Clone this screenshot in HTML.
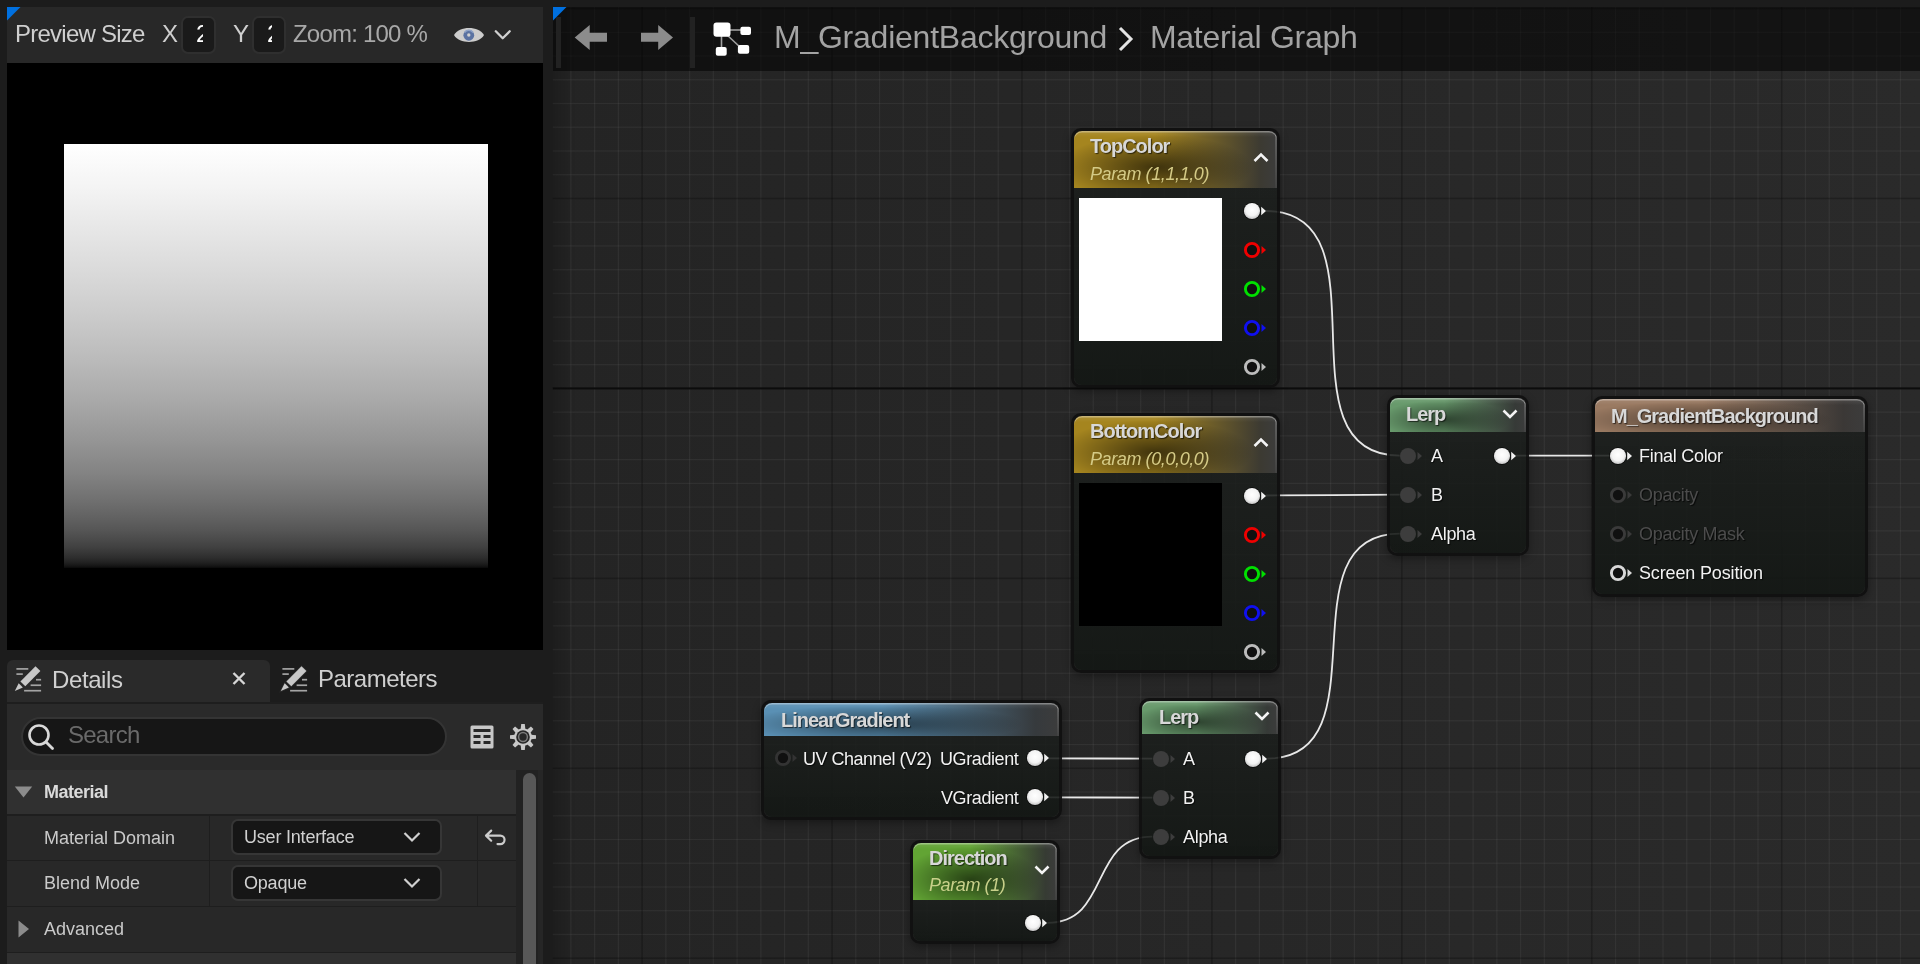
<!DOCTYPE html><html><head><meta charset="utf-8"><style>
html,body{margin:0;padding:0;width:1920px;height:964px;overflow:hidden;background:#1c1c1c;font-family:"Liberation Sans",sans-serif;}
.a{position:absolute;}
.t{position:absolute;white-space:pre;line-height:1;will-change:transform;}
</style></head><body>
<div class="a" style="left:7.00px;top:7.00px;width:536.00px;height:56.00px;background:#282828"></div>
<svg class="a" style="left:7px;top:7px" width="14" height="14"><polygon points="0,0 13.5,0 0,13.5" fill="#0070e0"/></svg>
<div class="t" style="left:15.00px;top:22.18px;font-size:24px;color:#cfcfcf;font-weight:400;font-style:normal;letter-spacing:-0.75px;">Preview Size</div>
<div class="t" style="left:162.00px;top:22.18px;font-size:24px;color:#cfcfcf;font-weight:400;font-style:normal;letter-spacing:0px;">X</div>
<div class="a" style="left:181.30px;top:16.00px;width:34.70px;height:37.60px;background:#1a1a1a;border:2px solid #2f2f2f;box-sizing:border-box;border-radius:7px"></div>
<div class="t" style="left:233.00px;top:22.18px;font-size:24px;color:#cfcfcf;font-weight:400;font-style:normal;letter-spacing:0px;">Y</div>
<div class="a" style="left:252.30px;top:16.00px;width:33.90px;height:37.60px;background:#1a1a1a;border:2px solid #2f2f2f;box-sizing:border-box;border-radius:7px"></div>
<div class="a" style="left:197px;top:16px;width:5.6px;height:36px;overflow:hidden"><div class="t" style="left:-1.4px;top:6.3px;font-size:24px;color:#fff">2</div></div>
<div class="a" style="left:267.9px;top:16px;width:4.5px;height:36px;overflow:hidden"><div class="t" style="left:-1.4px;top:6.3px;font-size:24px;color:#fff">2</div></div>
<div class="t" style="left:293.00px;top:22.18px;font-size:24px;color:#a8a8a8;font-weight:400;font-style:normal;letter-spacing:-0.8px;">Zoom: 100 %</div>
<svg class="a" style="left:440px;top:15px" width="85" height="40" viewBox="440 15 85 40"><path d="M454,35 C459,25.5 479,25.5 484,35 C479,44.3 459,44.3 454,35 Z" fill="#cdcdcd"/><circle cx="468.8" cy="35.3" r="5.4" fill="#5a72a2"/><path d="M464.5,32.5 A5.4,5.4 0 0 1 473.1,32.5" stroke="#8ea2c6" stroke-width="1.5" fill="none"/><circle cx="468.8" cy="35" r="1.7" fill="#d0d0d0"/><polyline points="495.8,31.3 502.7,38.3 509.7,31.3" fill="none" stroke="#d0d0d0" stroke-width="2.3" stroke-linecap="round" stroke-linejoin="round"/></svg>
<div class="a" style="left:7.00px;top:63.00px;width:536.00px;height:587.00px;background:#000"></div>
<div class="a" style="left:63.50px;top:144.00px;width:424.00px;height:424.00px;background:linear-gradient(to bottom,rgb(255,255,255) 0.00%,rgb(244,244,244) 10.00%,rgb(231,231,231) 20.00%,rgb(218,218,218) 30.00%,rgb(204,204,204) 40.00%,rgb(188,188,188) 50.00%,rgb(170,170,170) 60.00%,rgb(149,149,149) 70.00%,rgb(130,130,130) 78.00%,rgb(112,112,112) 84.00%,rgb(98,98,98) 88.00%,rgb(86,86,86) 91.00%,rgb(76,76,76) 93.00%,rgb(65,65,65) 95.00%,rgb(54,54,54) 96.50%,rgb(46,46,46) 97.50%,rgb(39,39,39) 98.20%,rgb(32,32,32) 98.80%,rgb(26,26,26) 99.20%,rgb(21,21,21) 99.50%,rgb(17,17,17) 99.70%,rgb(13,13,13) 99.85%,rgb(8,8,8) 100.00%)"></div>
<div class="a" style="left:7.00px;top:659.50px;width:262.50px;height:42.50px;background:#2a2a2a;border-radius:6px 6px 0 0"></div>
<svg class="a" style="left:0px;top:0px" width="50" height="964" viewBox="0 0 50 964"><g stroke="#a4a4a4" stroke-width="1.7"><path d="M16.4,668.9 H28.3"/><path d="M16.4,674.1 H22.8"/><path d="M36,679.7 H41.1"/><path d="M30.6,685.25 H41.1"/><path d="M24.1,690.7 H41.1"/></g><g fill="#c8c8c8" stroke="#2a2a2a" stroke-width="1.6" paint-order="stroke"><path d="M35.5,666.3 L40.4,671.1 L25.3,686.2 L20.4,681.4 Z"/><path d="M18.7,683.2 L22.9,687.6 L14.8,691.1 Z"/></g></svg>
<div class="t" style="left:52.40px;top:667.68px;font-size:24px;color:#d0d0d0;font-weight:400;font-style:normal;letter-spacing:-0.4px;">Details</div>
<svg class="a" style="left:231px;top:670px" width="16" height="17" viewBox="0 0 16 17"><path d="M2.5,3 L13.5,14 M13.5,3 L2.5,14" stroke="#d6d6d6" stroke-width="2.4"/></svg>
<svg class="a" style="left:266.4px;top:0px" width="50" height="964" viewBox="0 0 50 964"><g stroke="#a4a4a4" stroke-width="1.7"><path d="M16.4,668.9 H28.3"/><path d="M16.4,674.1 H22.8"/><path d="M36,679.7 H41.1"/><path d="M30.6,685.25 H41.1"/><path d="M24.1,690.7 H41.1"/></g><g fill="#c8c8c8" stroke="#2a2a2a" stroke-width="1.6" paint-order="stroke"><path d="M35.5,666.3 L40.4,671.1 L25.3,686.2 L20.4,681.4 Z"/><path d="M18.7,683.2 L22.9,687.6 L14.8,691.1 Z"/></g></svg>
<div class="t" style="left:318.20px;top:667.18px;font-size:24px;color:#cfcfcf;font-weight:400;font-style:normal;letter-spacing:-0.5px;">Parameters</div>
<div class="a" style="left:7.00px;top:702.00px;width:536.00px;height:1.60px;background:#1e1e1e"></div>
<div class="a" style="left:7.00px;top:703.60px;width:536.00px;height:260.40px;background:#2a2a2a"></div>
<div class="a" style="left:21.00px;top:717.00px;width:426.00px;height:39.00px;background:#161616;border:2px solid #343434;box-sizing:border-box;border-radius:20px"></div>
<svg class="a" style="left:27px;top:723px" width="28" height="28" viewBox="0 0 28 28"><circle cx="12" cy="12" r="9.5" fill="none" stroke="#d8d8d8" stroke-width="2.6"/><path d="M19,19 L25.5,25.5" stroke="#d8d8d8" stroke-width="2.8" stroke-linecap="round"/></svg>
<div class="t" style="left:67.80px;top:722.68px;font-size:24px;color:#6a6a6a;font-weight:400;font-style:normal;letter-spacing:-0.75px;">Search</div>
<svg class="a" style="left:469px;top:724px" width="27" height="26" viewBox="0 0 27 26"><rect x="1.5" y="1.5" width="23" height="23" rx="1.5" fill="#c8c8c8"/><g fill="#282828"><rect x="4.5" y="5" width="17" height="3"/><rect x="4.5" y="11" width="7" height="3"/><rect x="14.5" y="11" width="7" height="3"/><rect x="4.5" y="17" width="7" height="3"/><rect x="14.5" y="17" width="7" height="3"/></g></svg>
<svg class="a" style="left:503px;top:716.5px" width="40" height="40" viewBox="-20 -20 40 40"><g fill="#c8c8c8"><path d="M-2.3,-8 L-1.8,-13 L1.8,-13 L2.3,-8 Z" transform="rotate(0)"/><path d="M-2.3,-8 L-1.8,-13 L1.8,-13 L2.3,-8 Z" transform="rotate(45)"/><path d="M-2.3,-8 L-1.8,-13 L1.8,-13 L2.3,-8 Z" transform="rotate(90)"/><path d="M-2.3,-8 L-1.8,-13 L1.8,-13 L2.3,-8 Z" transform="rotate(135)"/><path d="M-2.3,-8 L-1.8,-13 L1.8,-13 L2.3,-8 Z" transform="rotate(180)"/><path d="M-2.3,-8 L-1.8,-13 L1.8,-13 L2.3,-8 Z" transform="rotate(225)"/><path d="M-2.3,-8 L-1.8,-13 L1.8,-13 L2.3,-8 Z" transform="rotate(270)"/><path d="M-2.3,-8 L-1.8,-13 L1.8,-13 L2.3,-8 Z" transform="rotate(315)"/><circle cx="0" cy="0" r="8.8"/></g><circle cx="0" cy="0" r="6.8" fill="#262626"/><circle cx="0" cy="0" r="4.4" fill="none" stroke="#7a7a7a" stroke-width="1.5"/></svg>
<div class="a" style="left:7.00px;top:769.50px;width:509.00px;height:44.50px;background:#303030"></div>
<svg class="a" style="left:14px;top:786px" width="19" height="12" viewBox="0 0 19 12"><polygon points="0.8,0.5 18.2,0.5 9.5,11.5" fill="#8c8c8c"/></svg>
<div class="t" style="left:44.40px;top:782.76px;font-size:18px;color:#dadada;font-weight:700;font-style:normal;letter-spacing:-0.5px;">Material</div>
<div class="a" style="left:7.00px;top:814.00px;width:509.00px;height:2.00px;background:#1e1e1e"></div>
<div class="a" style="left:7.00px;top:816.00px;width:509.00px;height:43.50px;background:#282828"></div>
<div class="a" style="left:7.00px;top:859.50px;width:509.00px;height:1.50px;background:#1e1e1e"></div>
<div class="a" style="left:7.00px;top:861.00px;width:509.00px;height:44.50px;background:#282828"></div>
<div class="a" style="left:7.00px;top:905.50px;width:509.00px;height:1.50px;background:#1e1e1e"></div>
<div class="a" style="left:7.00px;top:907.00px;width:509.00px;height:44.50px;background:#282828"></div>
<div class="a" style="left:7.00px;top:951.50px;width:509.00px;height:1.50px;background:#1e1e1e"></div>
<div class="a" style="left:7.00px;top:953.00px;width:509.00px;height:11.00px;background:#303030"></div>
<div class="a" style="left:208.60px;top:816.00px;width:1.40px;height:89.50px;background:#1e1e1e"></div>
<div class="a" style="left:476.50px;top:816.00px;width:1.50px;height:89.50px;background:#1f1f1f"></div>
<div class="t" style="left:44.40px;top:828.76px;font-size:18px;color:#cacaca;font-weight:400;font-style:normal;letter-spacing:0px;">Material Domain</div>
<div class="t" style="left:44.40px;top:873.76px;font-size:18px;color:#cacaca;font-weight:400;font-style:normal;letter-spacing:0px;">Blend Mode</div>
<div class="t" style="left:44.40px;top:919.76px;font-size:18px;color:#cacaca;font-weight:400;font-style:normal;letter-spacing:0px;">Advanced</div>
<svg class="a" style="left:18px;top:920px" width="12" height="18" viewBox="0 0 12 18"><polygon points="0.5,0.5 11,9 0.5,17.5" fill="#8c8c8c"/></svg>
<div class="a" style="left:231.30px;top:819.40px;width:210.40px;height:36.00px;background:#161616;border:2px solid #363636;box-sizing:border-box;border-radius:7px"></div>
<div class="t" style="left:244.40px;top:828.36px;font-size:18px;color:#d0d0d0;font-weight:400;font-style:normal;letter-spacing:-0.2px;">User Interface</div>
<svg class="a" style="left:402px;top:830.4px" width="20" height="14" viewBox="0 0 20 14"><polyline points="2.5,3 10,10.5 17.5,3" fill="none" stroke="#d0d0d0" stroke-width="2.2"/></svg>
<div class="a" style="left:231.30px;top:865.00px;width:210.40px;height:36.00px;background:#161616;border:2px solid #363636;box-sizing:border-box;border-radius:7px"></div>
<div class="t" style="left:244.40px;top:873.96px;font-size:18px;color:#d0d0d0;font-weight:400;font-style:normal;letter-spacing:-0.2px;">Opaque</div>
<svg class="a" style="left:402px;top:876.0px" width="20" height="14" viewBox="0 0 20 14"><polyline points="2.5,3 10,10.5 17.5,3" fill="none" stroke="#d0d0d0" stroke-width="2.2"/></svg>
<svg class="a" style="left:475px;top:820px" width="40" height="35" viewBox="475 820 40 35"><path d="M491.2,830.6 L486,835.6 L491.2,840.7 M486.5,835.6 H500.3 A4.25,4.25 0 0 1 500.3,844.1 H497.5" fill="none" stroke="#cccccc" stroke-width="2.2" stroke-linecap="round" stroke-linejoin="round"/></svg>
<div class="a" style="left:516.00px;top:769.50px;width:27.00px;height:194.50px;background:#222222"></div>
<div class="a" style="left:537.70px;top:769.50px;width:5.30px;height:194.50px;background:#262626"></div>
<div class="a" style="left:523.30px;top:773.00px;width:13.20px;height:207.00px;background:#585858;border-radius:7px"></div>
<div class="a" style="left:552.50px;top:7.00px;width:1367.50px;height:957.00px;background:linear-gradient(to right,#242424,#2a2a2a)"></div>
<svg class="a" style="left:0;top:0" width="1920" height="964" viewBox="0 0 1920 964"><defs><clipPath id="gc"><rect x="552.5" y="7" width="1367.5" height="957"/></clipPath></defs><g clip-path="url(#gc)"><rect x="546.48" y="7" width="1.3" height="957" fill="rgba(255,255,255,0.052)"/><rect x="570.22" y="7" width="1.3" height="957" fill="rgba(255,255,255,0.052)"/><rect x="593.97" y="7" width="1.3" height="957" fill="rgba(255,255,255,0.052)"/><rect x="617.71" y="7" width="1.3" height="957" fill="rgba(255,255,255,0.052)"/><rect x="665.19" y="7" width="1.3" height="957" fill="rgba(255,255,255,0.052)"/><rect x="688.93" y="7" width="1.3" height="957" fill="rgba(255,255,255,0.052)"/><rect x="712.68" y="7" width="1.3" height="957" fill="rgba(255,255,255,0.052)"/><rect x="736.42" y="7" width="1.3" height="957" fill="rgba(255,255,255,0.052)"/><rect x="760.16" y="7" width="1.3" height="957" fill="rgba(255,255,255,0.052)"/><rect x="783.90" y="7" width="1.3" height="957" fill="rgba(255,255,255,0.052)"/><rect x="807.64" y="7" width="1.3" height="957" fill="rgba(255,255,255,0.052)"/><rect x="855.13" y="7" width="1.3" height="957" fill="rgba(255,255,255,0.052)"/><rect x="878.87" y="7" width="1.3" height="957" fill="rgba(255,255,255,0.052)"/><rect x="902.61" y="7" width="1.3" height="957" fill="rgba(255,255,255,0.052)"/><rect x="926.35" y="7" width="1.3" height="957" fill="rgba(255,255,255,0.052)"/><rect x="950.10" y="7" width="1.3" height="957" fill="rgba(255,255,255,0.052)"/><rect x="973.84" y="7" width="1.3" height="957" fill="rgba(255,255,255,0.052)"/><rect x="997.58" y="7" width="1.3" height="957" fill="rgba(255,255,255,0.052)"/><rect x="1045.06" y="7" width="1.3" height="957" fill="rgba(255,255,255,0.052)"/><rect x="1068.81" y="7" width="1.3" height="957" fill="rgba(255,255,255,0.052)"/><rect x="1092.55" y="7" width="1.3" height="957" fill="rgba(255,255,255,0.052)"/><rect x="1116.29" y="7" width="1.3" height="957" fill="rgba(255,255,255,0.052)"/><rect x="1140.03" y="7" width="1.3" height="957" fill="rgba(255,255,255,0.052)"/><rect x="1163.77" y="7" width="1.3" height="957" fill="rgba(255,255,255,0.052)"/><rect x="1187.52" y="7" width="1.3" height="957" fill="rgba(255,255,255,0.052)"/><rect x="1235.00" y="7" width="1.3" height="957" fill="rgba(255,255,255,0.052)"/><rect x="1258.74" y="7" width="1.3" height="957" fill="rgba(255,255,255,0.052)"/><rect x="1282.48" y="7" width="1.3" height="957" fill="rgba(255,255,255,0.052)"/><rect x="1306.23" y="7" width="1.3" height="957" fill="rgba(255,255,255,0.052)"/><rect x="1329.97" y="7" width="1.3" height="957" fill="rgba(255,255,255,0.052)"/><rect x="1353.71" y="7" width="1.3" height="957" fill="rgba(255,255,255,0.052)"/><rect x="1377.45" y="7" width="1.3" height="957" fill="rgba(255,255,255,0.052)"/><rect x="1424.94" y="7" width="1.3" height="957" fill="rgba(255,255,255,0.052)"/><rect x="1448.68" y="7" width="1.3" height="957" fill="rgba(255,255,255,0.052)"/><rect x="1472.42" y="7" width="1.3" height="957" fill="rgba(255,255,255,0.052)"/><rect x="1496.16" y="7" width="1.3" height="957" fill="rgba(255,255,255,0.052)"/><rect x="1519.90" y="7" width="1.3" height="957" fill="rgba(255,255,255,0.052)"/><rect x="1543.65" y="7" width="1.3" height="957" fill="rgba(255,255,255,0.052)"/><rect x="1567.39" y="7" width="1.3" height="957" fill="rgba(255,255,255,0.052)"/><rect x="1614.87" y="7" width="1.3" height="957" fill="rgba(255,255,255,0.052)"/><rect x="1638.61" y="7" width="1.3" height="957" fill="rgba(255,255,255,0.052)"/><rect x="1662.36" y="7" width="1.3" height="957" fill="rgba(255,255,255,0.052)"/><rect x="1686.10" y="7" width="1.3" height="957" fill="rgba(255,255,255,0.052)"/><rect x="1709.84" y="7" width="1.3" height="957" fill="rgba(255,255,255,0.052)"/><rect x="1733.58" y="7" width="1.3" height="957" fill="rgba(255,255,255,0.052)"/><rect x="1757.32" y="7" width="1.3" height="957" fill="rgba(255,255,255,0.052)"/><rect x="1804.81" y="7" width="1.3" height="957" fill="rgba(255,255,255,0.052)"/><rect x="1828.55" y="7" width="1.3" height="957" fill="rgba(255,255,255,0.052)"/><rect x="1852.29" y="7" width="1.3" height="957" fill="rgba(255,255,255,0.052)"/><rect x="1876.03" y="7" width="1.3" height="957" fill="rgba(255,255,255,0.052)"/><rect x="1899.78" y="7" width="1.3" height="957" fill="rgba(255,255,255,0.052)"/><rect x="1923.52" y="7" width="1.3" height="957" fill="rgba(255,255,255,0.052)"/><rect x="552.5" y="-15.86" width="1367.5" height="1.3" fill="rgba(255,255,255,0.052)"/><rect x="552.5" y="31.62" width="1367.5" height="1.3" fill="rgba(255,255,255,0.052)"/><rect x="552.5" y="55.36" width="1367.5" height="1.3" fill="rgba(255,255,255,0.052)"/><rect x="552.5" y="79.10" width="1367.5" height="1.3" fill="rgba(255,255,255,0.052)"/><rect x="552.5" y="102.85" width="1367.5" height="1.3" fill="rgba(255,255,255,0.052)"/><rect x="552.5" y="126.59" width="1367.5" height="1.3" fill="rgba(255,255,255,0.052)"/><rect x="552.5" y="150.33" width="1367.5" height="1.3" fill="rgba(255,255,255,0.052)"/><rect x="552.5" y="174.07" width="1367.5" height="1.3" fill="rgba(255,255,255,0.052)"/><rect x="552.5" y="221.56" width="1367.5" height="1.3" fill="rgba(255,255,255,0.052)"/><rect x="552.5" y="245.30" width="1367.5" height="1.3" fill="rgba(255,255,255,0.052)"/><rect x="552.5" y="269.04" width="1367.5" height="1.3" fill="rgba(255,255,255,0.052)"/><rect x="552.5" y="292.78" width="1367.5" height="1.3" fill="rgba(255,255,255,0.052)"/><rect x="552.5" y="316.52" width="1367.5" height="1.3" fill="rgba(255,255,255,0.052)"/><rect x="552.5" y="340.27" width="1367.5" height="1.3" fill="rgba(255,255,255,0.052)"/><rect x="552.5" y="364.01" width="1367.5" height="1.3" fill="rgba(255,255,255,0.052)"/><rect x="552.5" y="411.49" width="1367.5" height="1.3" fill="rgba(255,255,255,0.052)"/><rect x="552.5" y="435.23" width="1367.5" height="1.3" fill="rgba(255,255,255,0.052)"/><rect x="552.5" y="458.98" width="1367.5" height="1.3" fill="rgba(255,255,255,0.052)"/><rect x="552.5" y="482.72" width="1367.5" height="1.3" fill="rgba(255,255,255,0.052)"/><rect x="552.5" y="506.46" width="1367.5" height="1.3" fill="rgba(255,255,255,0.052)"/><rect x="552.5" y="530.20" width="1367.5" height="1.3" fill="rgba(255,255,255,0.052)"/><rect x="552.5" y="553.94" width="1367.5" height="1.3" fill="rgba(255,255,255,0.052)"/><rect x="552.5" y="601.43" width="1367.5" height="1.3" fill="rgba(255,255,255,0.052)"/><rect x="552.5" y="625.17" width="1367.5" height="1.3" fill="rgba(255,255,255,0.052)"/><rect x="552.5" y="648.91" width="1367.5" height="1.3" fill="rgba(255,255,255,0.052)"/><rect x="552.5" y="672.65" width="1367.5" height="1.3" fill="rgba(255,255,255,0.052)"/><rect x="552.5" y="696.40" width="1367.5" height="1.3" fill="rgba(255,255,255,0.052)"/><rect x="552.5" y="720.14" width="1367.5" height="1.3" fill="rgba(255,255,255,0.052)"/><rect x="552.5" y="743.88" width="1367.5" height="1.3" fill="rgba(255,255,255,0.052)"/><rect x="552.5" y="791.36" width="1367.5" height="1.3" fill="rgba(255,255,255,0.052)"/><rect x="552.5" y="815.11" width="1367.5" height="1.3" fill="rgba(255,255,255,0.052)"/><rect x="552.5" y="838.85" width="1367.5" height="1.3" fill="rgba(255,255,255,0.052)"/><rect x="552.5" y="862.59" width="1367.5" height="1.3" fill="rgba(255,255,255,0.052)"/><rect x="552.5" y="886.33" width="1367.5" height="1.3" fill="rgba(255,255,255,0.052)"/><rect x="552.5" y="910.07" width="1367.5" height="1.3" fill="rgba(255,255,255,0.052)"/><rect x="552.5" y="933.82" width="1367.5" height="1.3" fill="rgba(255,255,255,0.052)"/><rect x="552.5" y="981.30" width="1367.5" height="1.3" fill="rgba(255,255,255,0.052)"/><rect x="641.30" y="7" width="1.6" height="957" fill="rgba(0,0,0,0.24)"/><rect x="831.24" y="7" width="1.6" height="957" fill="rgba(0,0,0,0.24)"/><rect x="1021.17" y="7" width="1.6" height="957" fill="rgba(0,0,0,0.24)"/><rect x="1211.11" y="7" width="1.6" height="957" fill="rgba(0,0,0,0.24)"/><rect x="1401.04" y="7" width="1.6" height="957" fill="rgba(0,0,0,0.24)"/><rect x="1590.98" y="7" width="1.6" height="957" fill="rgba(0,0,0,0.24)"/><rect x="1780.92" y="7" width="1.6" height="957" fill="rgba(0,0,0,0.24)"/><rect x="552.5" y="7.73" width="1367.5" height="1.6" fill="rgba(0,0,0,0.24)"/><rect x="552.5" y="197.66" width="1367.5" height="1.6" fill="rgba(0,0,0,0.24)"/><rect x="552.5" y="577.54" width="1367.5" height="1.6" fill="rgba(0,0,0,0.24)"/><rect x="552.5" y="767.47" width="1367.5" height="1.6" fill="rgba(0,0,0,0.24)"/><rect x="552.5" y="957.41" width="1367.5" height="1.6" fill="rgba(0,0,0,0.24)"/><rect x="552.5" y="387.40" width="1367.5" height="2" fill="#0c0c0c"/></g></svg>
<div class="a" style="left:552.50px;top:7.00px;width:22.00px;height:957.00px;background:linear-gradient(to right,rgba(0,0,0,0.18),rgba(0,0,0,0))"></div>
<svg class="a" style="left:0;top:0" width="1920" height="964" viewBox="0 0 1920 964"><defs><radialGradient id="pw" cx="50%" cy="42%" r="58%"><stop offset="0%" stop-color="#ffffff"/><stop offset="65%" stop-color="#f3f3f3"/><stop offset="100%" stop-color="#c4c4c4"/></radialGradient></defs><g fill="none" stroke="#e8e8e8" stroke-width="1.8"><path d="M1266.00,211.00 C1392.10,211.00 1273.60,455.60 1399.70,455.60"/><path d="M1266.00,495.50 C1310.87,495.50 1354.83,494.60 1399.70,494.60"/><path d="M1515.70,455.60 C1547.10,455.60 1578.40,455.70 1609.80,455.70"/><path d="M1267.30,758.60 C1386.43,758.60 1280.57,533.60 1399.70,533.60"/><path d="M1048.50,758.40 C1083.17,758.40 1117.63,758.60 1152.30,758.60"/><path d="M1048.50,797.40 C1083.17,797.40 1117.63,797.60 1152.30,797.60"/><path d="M1047.40,922.80 C1111.10,922.80 1088.60,836.60 1152.30,836.60"/></g></svg>
<div class="a" style="left:1070.70px;top:128.10px;width:209.00px;height:260.10px;border-radius:10px;border:3px solid rgba(16,16,16,0.95);box-sizing:border-box;box-shadow:0 3px 9px rgba(0,0,0,0.35)"><div class="a" style="left:0;top:56.90px;width:100%;bottom:0;background:linear-gradient(to bottom,rgba(28,31,29,0.88),rgba(19,23,20,0.9));border-radius:0 0 7.5px 7.5px"></div><div class="a" style="left:0;top:0;width:100%;height:56.90px;border-radius:8px 8px 0 0;overflow:hidden;box-shadow:inset 0 1.6px 0 rgba(255,255,255,0.32);background:linear-gradient(to bottom,rgba(255,255,255,0.10) 0px,rgba(255,255,255,0) 6px),radial-gradient(ellipse 48% 58% at 40% 64%,rgba(0,0,0,0.62),rgba(0,0,0,0.279) 55%,rgba(0,0,0,0) 100%),linear-gradient(to right,#a5851f 0%,#a5851f 40%,#3c3a32 92%,#3c3c3c 100%)"><div class="a" style="right:0;top:0;width:2px;height:100%;background:linear-gradient(to bottom,rgba(255,255,255,0.2),rgba(255,255,255,0.03))"></div></div></div>
<div class="t" style="left:1089.60px;top:136.22px;font-size:20px;font-weight:700;color:#d8d8d8;letter-spacing:-1px;text-shadow:1px 1px 1px rgba(0,0,0,0.6)">TopColor</div>
<div class="t" style="left:1090.10px;top:164.76px;font-size:18px;font-style:italic;color:#d4ca86;letter-spacing:-0.4px">Param (1,1,1,0)</div>
<svg class="a" style="left:1252.50px;top:151.50px" width="16" height="12" viewBox="0 0 16 12"><polyline points="1.5,9 8,2.5 14.5,9" fill="none" stroke="#f4f4f4" stroke-width="2.6"/></svg>
<div class="a" style="left:1079px;top:198px;width:143px;height:143px;background:#fff"></div>
<svg class="a" style="left:1242.00px;top:201.00px" width="26" height="20" viewBox="0 0 26 20"><circle cx="10" cy="10" r="8.8" fill="rgba(0,0,0,0.7)"/><circle cx="10" cy="10" r="8.1" fill="url(#pw)"/><polygon points="19.2,5.8 24,10 19.2,14.2" fill="#f0f0f0"/></svg>
<svg class="a" style="left:1242.00px;top:239.80px" width="26" height="20" viewBox="0 0 26 20"><circle cx="10" cy="10" r="6.6" fill="#101010" stroke="#f00000" stroke-width="2.9"/><polygon points="19.5,6 24,10 19.5,14" fill="#f00000"/></svg>
<svg class="a" style="left:1242.00px;top:278.80px" width="26" height="20" viewBox="0 0 26 20"><circle cx="10" cy="10" r="6.6" fill="#101010" stroke="#00e000" stroke-width="2.9"/><polygon points="19.5,6 24,10 19.5,14" fill="#00e000"/></svg>
<svg class="a" style="left:1242.00px;top:317.80px" width="26" height="20" viewBox="0 0 26 20"><circle cx="10" cy="10" r="6.6" fill="#101010" stroke="#1010f0" stroke-width="2.9"/><polygon points="19.5,6 24,10 19.5,14" fill="#1010f0"/></svg>
<svg class="a" style="left:1242.00px;top:356.80px" width="26" height="20" viewBox="0 0 26 20"><circle cx="10" cy="10" r="6.6" fill="#101010" stroke="#bcbcbc" stroke-width="2.9"/><polygon points="19.5,6 24,10 19.5,14" fill="#bcbcbc"/></svg>
<div class="a" style="left:1070.70px;top:413.10px;width:209.00px;height:260.10px;border-radius:10px;border:3px solid rgba(16,16,16,0.95);box-sizing:border-box;box-shadow:0 3px 9px rgba(0,0,0,0.35)"><div class="a" style="left:0;top:56.90px;width:100%;bottom:0;background:linear-gradient(to bottom,rgba(28,31,29,0.88),rgba(19,23,20,0.9));border-radius:0 0 7.5px 7.5px"></div><div class="a" style="left:0;top:0;width:100%;height:56.90px;border-radius:8px 8px 0 0;overflow:hidden;box-shadow:inset 0 1.6px 0 rgba(255,255,255,0.32);background:linear-gradient(to bottom,rgba(255,255,255,0.10) 0px,rgba(255,255,255,0) 6px),radial-gradient(ellipse 48% 58% at 40% 64%,rgba(0,0,0,0.62),rgba(0,0,0,0.279) 55%,rgba(0,0,0,0) 100%),linear-gradient(to right,#a5851f 0%,#a5851f 40%,#3c3a32 92%,#3c3c3c 100%)"><div class="a" style="right:0;top:0;width:2px;height:100%;background:linear-gradient(to bottom,rgba(255,255,255,0.2),rgba(255,255,255,0.03))"></div></div></div>
<div class="t" style="left:1089.60px;top:421.07px;font-size:20px;font-weight:700;color:#d8d8d8;letter-spacing:-1px;text-shadow:1px 1px 1px rgba(0,0,0,0.6)">BottomColor</div>
<div class="t" style="left:1090.10px;top:449.76px;font-size:18px;font-style:italic;color:#d4ca86;letter-spacing:-0.4px">Param (0,0,0,0)</div>
<svg class="a" style="left:1252.50px;top:436.50px" width="16" height="12" viewBox="0 0 16 12"><polyline points="1.5,9 8,2.5 14.5,9" fill="none" stroke="#f4f4f4" stroke-width="2.6"/></svg>
<div class="a" style="left:1079px;top:483px;width:143px;height:143px;background:#000"></div>
<svg class="a" style="left:1242.00px;top:485.70px" width="26" height="20" viewBox="0 0 26 20"><circle cx="10" cy="10" r="8.8" fill="rgba(0,0,0,0.7)"/><circle cx="10" cy="10" r="8.1" fill="url(#pw)"/><polygon points="19.2,5.8 24,10 19.2,14.2" fill="#f0f0f0"/></svg>
<svg class="a" style="left:1242.00px;top:524.80px" width="26" height="20" viewBox="0 0 26 20"><circle cx="10" cy="10" r="6.6" fill="#101010" stroke="#f00000" stroke-width="2.9"/><polygon points="19.5,6 24,10 19.5,14" fill="#f00000"/></svg>
<svg class="a" style="left:1242.00px;top:563.80px" width="26" height="20" viewBox="0 0 26 20"><circle cx="10" cy="10" r="6.6" fill="#101010" stroke="#00e000" stroke-width="2.9"/><polygon points="19.5,6 24,10 19.5,14" fill="#00e000"/></svg>
<svg class="a" style="left:1242.00px;top:602.80px" width="26" height="20" viewBox="0 0 26 20"><circle cx="10" cy="10" r="6.6" fill="#101010" stroke="#1010f0" stroke-width="2.9"/><polygon points="19.5,6 24,10 19.5,14" fill="#1010f0"/></svg>
<svg class="a" style="left:1242.00px;top:641.80px" width="26" height="20" viewBox="0 0 26 20"><circle cx="10" cy="10" r="6.6" fill="#101010" stroke="#bcbcbc" stroke-width="2.9"/><polygon points="19.5,6 24,10 19.5,14" fill="#bcbcbc"/></svg>
<div class="a" style="left:1387.00px;top:395.00px;width:141.80px;height:160.70px;border-radius:10px;border:3px solid rgba(16,16,16,0.95);box-sizing:border-box;box-shadow:0 3px 9px rgba(0,0,0,0.35)"><div class="a" style="left:0;top:33.70px;width:100%;bottom:0;background:linear-gradient(to bottom,rgba(28,31,29,0.88),rgba(19,23,20,0.9));border-radius:0 0 7.5px 7.5px"></div><div class="a" style="left:0;top:0;width:100%;height:33.70px;border-radius:8px 8px 0 0;overflow:hidden;box-shadow:inset 0 1.6px 0 rgba(255,255,255,0.32);background:linear-gradient(to bottom,rgba(255,255,255,0.10) 0px,rgba(255,255,255,0) 6px),radial-gradient(ellipse 48% 58% at 40% 64%,rgba(0,0,0,0.55),rgba(0,0,0,0.24750000000000003) 55%,rgba(0,0,0,0) 100%),linear-gradient(to right,#689a6c 0%,#689a6c 40%,#363a37 92%,#3c3c3c 100%)"><div class="a" style="right:0;top:0;width:2px;height:100%;background:linear-gradient(to bottom,rgba(255,255,255,0.2),rgba(255,255,255,0.03))"></div></div></div>
<div class="t" style="left:1406.40px;top:404.17px;font-size:20px;font-weight:700;color:#d8d8d8;letter-spacing:-1px;text-shadow:1px 1px 1px rgba(0,0,0,0.6)">Lerp</div>
<svg class="a" style="left:1501.50px;top:407.80px" width="16" height="12" viewBox="0 0 16 12"><polyline points="1.5,2.5 8,9 14.5,2.5" fill="none" stroke="#f4f4f4" stroke-width="2.6"/></svg>
<svg class="a" style="left:1398.20px;top:445.60px" width="26" height="20" viewBox="0 0 26 20"><circle cx="10" cy="10" r="8" fill="#3d3d3d"/><polygon points="19.5,6 24,10 19.5,14" fill="#3d3d3d"/></svg>
<svg class="a" style="left:1398.20px;top:484.60px" width="26" height="20" viewBox="0 0 26 20"><circle cx="10" cy="10" r="8" fill="#3d3d3d"/><polygon points="19.5,6 24,10 19.5,14" fill="#3d3d3d"/></svg>
<svg class="a" style="left:1398.20px;top:523.60px" width="26" height="20" viewBox="0 0 26 20"><circle cx="10" cy="10" r="8" fill="#3d3d3d"/><polygon points="19.5,6 24,10 19.5,14" fill="#3d3d3d"/></svg>
<svg class="a" style="left:1491.70px;top:445.60px" width="26" height="20" viewBox="0 0 26 20"><circle cx="10" cy="10" r="8.8" fill="rgba(0,0,0,0.7)"/><circle cx="10" cy="10" r="8.1" fill="url(#pw)"/><polygon points="19.2,5.8 24,10 19.2,14.2" fill="#f0f0f0"/></svg>
<div class="t" style="left:1430.60px;top:446.96px;font-size:18px;color:#f2f2f2;letter-spacing:-0.3px;text-shadow:1px 1px 1px rgba(0,0,0,0.7)">A</div>
<div class="t" style="left:1430.60px;top:485.96px;font-size:18px;color:#f2f2f2;letter-spacing:-0.3px;text-shadow:1px 1px 1px rgba(0,0,0,0.7)">B</div>
<div class="t" style="left:1430.60px;top:524.96px;font-size:18px;color:#f2f2f2;letter-spacing:-0.3px;text-shadow:1px 1px 1px rgba(0,0,0,0.7)">Alpha</div>
<div class="a" style="left:1592.20px;top:395.90px;width:275.60px;height:200.70px;border-radius:10px;border:3px solid rgba(16,16,16,0.95);box-sizing:border-box;box-shadow:0 3px 9px rgba(0,0,0,0.35)"><div class="a" style="left:0;top:32.85px;width:100%;bottom:0;background:linear-gradient(to bottom,rgba(28,31,29,0.88),rgba(19,23,20,0.9));border-radius:0 0 7.5px 7.5px"></div><div class="a" style="left:0;top:0;width:100%;height:32.85px;border-radius:8px 8px 0 0;overflow:hidden;box-shadow:inset 0 1.6px 0 rgba(255,255,255,0.32);background:linear-gradient(to bottom,rgba(255,255,255,0.10) 0px,rgba(255,255,255,0) 6px),radial-gradient(ellipse 48% 58% at 40% 64%,rgba(0,0,0,0.5),rgba(0,0,0,0.225) 55%,rgba(0,0,0,0) 100%),linear-gradient(to right,#9a7a62 0%,#9a7a62 40%,#3b3836 92%,#3c3c3c 100%)"><div class="a" style="right:0;top:0;width:2px;height:100%;background:linear-gradient(to bottom,rgba(255,255,255,0.2),rgba(255,255,255,0.03))"></div></div></div>
<div class="t" style="left:1611.30px;top:405.97px;font-size:20px;font-weight:700;color:#d8d8d8;letter-spacing:-1px;text-shadow:1px 1px 1px rgba(0,0,0,0.6)">M_GradientBackground</div>
<svg class="a" style="left:1608.30px;top:445.70px" width="26" height="20" viewBox="0 0 26 20"><circle cx="10" cy="10" r="8.8" fill="rgba(0,0,0,0.7)"/><circle cx="10" cy="10" r="8.1" fill="url(#pw)"/><polygon points="19.2,5.8 24,10 19.2,14.2" fill="#f0f0f0"/></svg>
<svg class="a" style="left:1608.30px;top:484.70px" width="26" height="20" viewBox="0 0 26 20"><circle cx="10" cy="10" r="6.6" fill="#101010" stroke="#3a3a3a" stroke-width="2.9"/><polygon points="19.5,6 24,10 19.5,14" fill="#3a3a3a"/></svg>
<svg class="a" style="left:1608.30px;top:523.70px" width="26" height="20" viewBox="0 0 26 20"><circle cx="10" cy="10" r="6.6" fill="#101010" stroke="#3a3a3a" stroke-width="2.9"/><polygon points="19.5,6 24,10 19.5,14" fill="#3a3a3a"/></svg>
<svg class="a" style="left:1608.30px;top:562.70px" width="26" height="20" viewBox="0 0 26 20"><circle cx="10" cy="10" r="6.6" fill="#101010" stroke="#d8d8d8" stroke-width="2.9"/><polygon points="19.5,6 24,10 19.5,14" fill="#d8d8d8"/></svg>
<div class="t" style="left:1638.50px;top:447.06px;font-size:18px;color:#f2f2f2;letter-spacing:-0.3px;text-shadow:1px 1px 1px rgba(0,0,0,0.7)">Final Color</div>
<div class="t" style="left:1638.50px;top:486.06px;font-size:18px;color:#4c4c4c;letter-spacing:-0.3px;text-shadow:1px 1px 1px rgba(0,0,0,0.7)">Opacity</div>
<div class="t" style="left:1638.50px;top:525.06px;font-size:18px;color:#4c4c4c;letter-spacing:-0.3px;text-shadow:1px 1px 1px rgba(0,0,0,0.7)">Opacity Mask</div>
<div class="t" style="left:1638.50px;top:564.06px;font-size:18px;color:#f2f2f2;letter-spacing:-0.15px;text-shadow:1px 1px 1px rgba(0,0,0,0.7)">Screen Position</div>
<div class="a" style="left:761.20px;top:700.00px;width:300.60px;height:119.60px;border-radius:10px;border:3px solid rgba(16,16,16,0.95);box-sizing:border-box;box-shadow:0 3px 9px rgba(0,0,0,0.35)"><div class="a" style="left:0;top:33.00px;width:100%;bottom:0;background:linear-gradient(to bottom,rgba(28,31,29,0.88),rgba(19,23,20,0.9));border-radius:0 0 7.5px 7.5px"></div><div class="a" style="left:0;top:0;width:100%;height:33.00px;border-radius:8px 8px 0 0;overflow:hidden;box-shadow:inset 0 1.6px 0 rgba(255,255,255,0.32);background:linear-gradient(to bottom,rgba(255,255,255,0.10) 0px,rgba(255,255,255,0) 6px),radial-gradient(ellipse 48% 58% at 40% 64%,rgba(0,0,0,0.55),rgba(0,0,0,0.24750000000000003) 55%,rgba(0,0,0,0) 100%),linear-gradient(to right,#5a90b4 0%,#5a90b4 40%,#363a3d 92%,#3c3c3c 100%)"><div class="a" style="right:0;top:0;width:2px;height:100%;background:linear-gradient(to bottom,rgba(255,255,255,0.2),rgba(255,255,255,0.03))"></div></div></div>
<div class="t" style="left:780.90px;top:709.52px;font-size:20px;font-weight:700;color:#d8d8d8;letter-spacing:-1px;text-shadow:1px 1px 1px rgba(0,0,0,0.6)">LinearGradient</div>
<svg class="a" style="left:772.70px;top:748.40px" width="26" height="20" viewBox="0 0 26 20"><circle cx="10" cy="10" r="6.6" fill="#101010" stroke="#333333" stroke-width="2.9"/><polygon points="19.5,6 24,10 19.5,14" fill="#333333"/></svg>
<svg class="a" style="left:1024.50px;top:748.40px" width="26" height="20" viewBox="0 0 26 20"><circle cx="10" cy="10" r="8.8" fill="rgba(0,0,0,0.7)"/><circle cx="10" cy="10" r="8.1" fill="url(#pw)"/><polygon points="19.2,5.8 24,10 19.2,14.2" fill="#f0f0f0"/></svg>
<svg class="a" style="left:1024.50px;top:787.40px" width="26" height="20" viewBox="0 0 26 20"><circle cx="10" cy="10" r="8.8" fill="rgba(0,0,0,0.7)"/><circle cx="10" cy="10" r="8.1" fill="url(#pw)"/><polygon points="19.2,5.8 24,10 19.2,14.2" fill="#f0f0f0"/></svg>
<div class="t" style="left:802.60px;top:749.76px;font-size:18px;color:#f2f2f2;letter-spacing:-0.5px;text-shadow:1px 1px 1px rgba(0,0,0,0.7)">UV Channel (V2)</div>
<div class="t" style="right:901.50px;top:749.76px;font-size:18px;color:#f2f2f2;letter-spacing:-0.4px;text-shadow:1px 1px 1px rgba(0,0,0,0.7)">UGradient</div>
<div class="t" style="right:901.50px;top:788.76px;font-size:18px;color:#f2f2f2;letter-spacing:-0.4px;text-shadow:1px 1px 1px rgba(0,0,0,0.7)">VGradient</div>
<div class="a" style="left:1139.30px;top:697.90px;width:141.60px;height:160.75px;border-radius:10px;border:3px solid rgba(16,16,16,0.95);box-sizing:border-box;box-shadow:0 3px 9px rgba(0,0,0,0.35)"><div class="a" style="left:0;top:33.60px;width:100%;bottom:0;background:linear-gradient(to bottom,rgba(28,31,29,0.88),rgba(19,23,20,0.9));border-radius:0 0 7.5px 7.5px"></div><div class="a" style="left:0;top:0;width:100%;height:33.60px;border-radius:8px 8px 0 0;overflow:hidden;box-shadow:inset 0 1.6px 0 rgba(255,255,255,0.32);background:linear-gradient(to bottom,rgba(255,255,255,0.10) 0px,rgba(255,255,255,0) 6px),radial-gradient(ellipse 48% 58% at 40% 64%,rgba(0,0,0,0.55),rgba(0,0,0,0.24750000000000003) 55%,rgba(0,0,0,0) 100%),linear-gradient(to right,#689a6c 0%,#689a6c 40%,#363a37 92%,#3c3c3c 100%)"><div class="a" style="right:0;top:0;width:2px;height:100%;background:linear-gradient(to bottom,rgba(255,255,255,0.2),rgba(255,255,255,0.03))"></div></div></div>
<div class="t" style="left:1158.70px;top:707.27px;font-size:20px;font-weight:700;color:#d8d8d8;letter-spacing:-1px;text-shadow:1px 1px 1px rgba(0,0,0,0.6)">Lerp</div>
<svg class="a" style="left:1254.00px;top:710.00px" width="16" height="12" viewBox="0 0 16 12"><polyline points="1.5,2.5 8,9 14.5,2.5" fill="none" stroke="#f4f4f4" stroke-width="2.6"/></svg>
<svg class="a" style="left:1150.80px;top:748.60px" width="26" height="20" viewBox="0 0 26 20"><circle cx="10" cy="10" r="8" fill="#3d3d3d"/><polygon points="19.5,6 24,10 19.5,14" fill="#3d3d3d"/></svg>
<svg class="a" style="left:1150.80px;top:787.60px" width="26" height="20" viewBox="0 0 26 20"><circle cx="10" cy="10" r="8" fill="#3d3d3d"/><polygon points="19.5,6 24,10 19.5,14" fill="#3d3d3d"/></svg>
<svg class="a" style="left:1150.80px;top:826.60px" width="26" height="20" viewBox="0 0 26 20"><circle cx="10" cy="10" r="8" fill="#3d3d3d"/><polygon points="19.5,6 24,10 19.5,14" fill="#3d3d3d"/></svg>
<svg class="a" style="left:1243.30px;top:748.60px" width="26" height="20" viewBox="0 0 26 20"><circle cx="10" cy="10" r="8.8" fill="rgba(0,0,0,0.7)"/><circle cx="10" cy="10" r="8.1" fill="url(#pw)"/><polygon points="19.2,5.8 24,10 19.2,14.2" fill="#f0f0f0"/></svg>
<div class="t" style="left:1183.20px;top:749.96px;font-size:18px;color:#f2f2f2;letter-spacing:-0.3px;text-shadow:1px 1px 1px rgba(0,0,0,0.7)">A</div>
<div class="t" style="left:1183.20px;top:788.96px;font-size:18px;color:#f2f2f2;letter-spacing:-0.3px;text-shadow:1px 1px 1px rgba(0,0,0,0.7)">B</div>
<div class="t" style="left:1183.20px;top:827.96px;font-size:18px;color:#f2f2f2;letter-spacing:-0.3px;text-shadow:1px 1px 1px rgba(0,0,0,0.7)">Alpha</div>
<div class="a" style="left:909.80px;top:839.90px;width:150.10px;height:104.55px;border-radius:10px;border:3px solid rgba(16,16,16,0.95);box-sizing:border-box;box-shadow:0 3px 9px rgba(0,0,0,0.35)"><div class="a" style="left:0;top:57.30px;width:100%;bottom:0;background:linear-gradient(to bottom,rgba(28,31,29,0.88),rgba(19,23,20,0.9));border-radius:0 0 7.5px 7.5px"></div><div class="a" style="left:0;top:0;width:100%;height:57.30px;border-radius:8px 8px 0 0;overflow:hidden;box-shadow:inset 0 1.6px 0 rgba(255,255,255,0.32);background:linear-gradient(to bottom,rgba(255,255,255,0.10) 0px,rgba(255,255,255,0) 6px),radial-gradient(ellipse 48% 58% at 40% 64%,rgba(0,0,0,0.6),rgba(0,0,0,0.27) 55%,rgba(0,0,0,0) 100%),linear-gradient(to right,#62a434 0%,#62a434 40%,#363b33 92%,#3c3c3c 100%)"><div class="a" style="right:0;top:0;width:2px;height:100%;background:linear-gradient(to bottom,rgba(255,255,255,0.2),rgba(255,255,255,0.03))"></div></div></div>
<div class="t" style="left:928.60px;top:847.77px;font-size:20px;font-weight:700;color:#d8d8d8;letter-spacing:-1px;text-shadow:1px 1px 1px rgba(0,0,0,0.6)">Direction</div>
<div class="t" style="left:929.10px;top:875.86px;font-size:18px;font-style:italic;color:#c8d08a;letter-spacing:-0.4px">Param (1)</div>
<svg class="a" style="left:1033.50px;top:864.00px" width="16" height="12" viewBox="0 0 16 12"><polyline points="1.5,2.5 8,9 14.5,2.5" fill="none" stroke="#f4f4f4" stroke-width="2.6"/></svg>
<svg class="a" style="left:1023.40px;top:912.80px" width="26" height="20" viewBox="0 0 26 20"><circle cx="10" cy="10" r="8.8" fill="rgba(0,0,0,0.7)"/><circle cx="10" cy="10" r="8.1" fill="url(#pw)"/><polygon points="19.2,5.8 24,10 19.2,14.2" fill="#f0f0f0"/></svg>
<div class="a" style="left:552.50px;top:7.00px;width:1367.50px;height:64.00px;background:rgba(0,0,0,0.53)"></div>
<svg class="a" style="left:553px;top:7px" width="14" height="14"><polygon points="0,0 13.5,0 0,13.5" fill="#0070e0"/></svg>
<div class="a" style="left:556.00px;top:17.00px;width:5.00px;height:50.50px;background:#222"></div>
<div class="a" style="left:690.00px;top:17.00px;width:5.00px;height:50.50px;background:#222"></div>
<svg class="a" style="left:570px;top:20px" width="110" height="36" viewBox="570 20 110 36"><path d="M574.7,37.5 L589.7,25 L589.7,32.8 L607,32.8 L607,41.8 L589.7,41.8 L589.7,50 Z" fill="#8c8c8c"/><path d="M673,37.5 L658.2,25 L658.2,32.8 L641,32.8 L641,41.8 L658.2,41.8 L658.2,50 Z" fill="#8c8c8c"/></svg>
<svg class="a" style="left:705px;top:15px" width="55" height="48" viewBox="705 15 55 48"><g stroke="#a0a0a0" stroke-width="1.6" fill="none"><path d="M728,30 L742,30"/><path d="M721.5,35 L721.5,49"/><path d="M726,34 L741,48"/></g><g fill="#ffffff"><rect x="713.5" y="22.5" width="17" height="14.2" rx="3"/><rect x="740.4" y="26.8" width="10.6" height="8.3" rx="2"/><rect x="715.8" y="46.9" width="10.9" height="8.8" rx="2"/><rect x="737.9" y="45" width="11.3" height="8.8" rx="2"/></g></svg>
<div class="t" style="left:774.00px;top:20.91px;font-size:32px;color:#a3a3a3;font-weight:400;font-style:normal;letter-spacing:-0.24px;">M_GradientBackground</div>
<svg class="a" style="left:1114px;top:24px" width="26" height="30" viewBox="0 0 26 30"><polyline points="6,4 17,15 6,26" fill="none" stroke="#e4e4e4" stroke-width="3"/></svg>
<div class="t" style="left:1149.50px;top:20.91px;font-size:32px;color:#a3a3a3;font-weight:400;font-style:normal;letter-spacing:-0.3px;">Material Graph</div>
</body></html>
